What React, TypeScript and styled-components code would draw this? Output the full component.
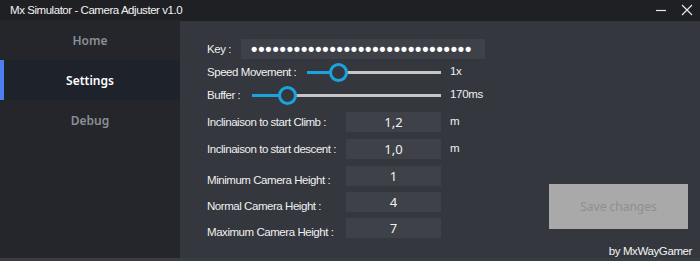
import React from "react";
import styled, { createGlobalStyle } from "styled-components";

const GlobalStyle = createGlobalStyle`
  html, body {
    margin: 0;
    padding: 0;
    background: #1f2024;
  }
  * {
    box-sizing: border-box;
  }
`;

const LABEL_FONT = `"Liberation Sans", Arial, sans-serif`;
const UI_FONT = `"Noto Sans", "Open Sans", sans-serif`;

type Slide = { label: string; left: number; width: number; pos: number; value: string; top: number };
type Field = { label: string; value: string; unit?: string; top: number; drop?: number };

const sliders: Slide[] = [
  { label: "Speed Movement :", left: 307, width: 134, pos: 32, value: "1x", top: 3 },
  { label: "Buffer :", left: 252, width: 189, pos: 36, value: "170ms", top: 3 },
];

const fields: Field[] = [
  { label: "Inclinaison to start Climb :", value: "1,2", unit: "m", top: 7 },
  { label: "Inclinaison to start descent :", value: "1,0", unit: "m", top: 7 },
  { label: "Minimum Camera Height :", value: "1", top: 7, drop: 4 },
  { label: "Normal Camera Height :", value: "4", top: 6, drop: 4 },
  { label: "Maximum Camera Height :", value: "7", top: 6, drop: 4 },
];

const App = () => {
  return (
    <>
      <GlobalStyle />
      <Window>
        <TitleBar>
          <Title>Mx Simulator - Camera Adjuster v1.0</Title>
          <WinButtons>
            <svg width="12" height="12" viewBox="0 0 12 12">
              <line x1="1" y1="6.5" x2="11" y2="6.5" stroke="#e6e6e6" strokeWidth="1.2" />
            </svg>
            <svg width="12" height="12" viewBox="0 0 12 12">
              <path d="M1 1 L11 11 M11 1 L1 11" stroke="#e6e6e6" strokeWidth="1.2" />
            </svg>
          </WinButtons>
        </TitleBar>
        <Body>
          <Sidebar>
            <NavItem>Home</NavItem>
            <NavItem active>Settings</NavItem>
            <NavItem>Debug</NavItem>
          </Sidebar>
          <Content>
            <Form>
              <KeyRow>
                <Label>Key :</Label>
                <KeyBox>{"•".repeat(31)}</KeyBox>
              </KeyRow>
              {sliders.map((s) => (
                <Row key={s.label} top={s.top}>
                  <Label>{s.label}</Label>
                  <Track left={s.left} width={s.width}>
                    <Fill style={{ width: s.pos }} />
                    <Thumb style={{ left: s.pos - 10 }} />
                  </Track>
                  <Unit>{s.value}</Unit>
                </Row>
              ))}
              {fields.map((f) => (
                <FieldRow key={f.label} top={f.top}>
                  <Label drop={f.drop}>{f.label}</Label>
                  <ValueBox>{f.value}</ValueBox>
                  {f.unit && <Unit>{f.unit}</Unit>}
                </FieldRow>
              ))}
            </Form>
            <Aside>
              <SaveButton disabled>Save changes</SaveButton>
              <Credit>by MxWayGamer</Credit>
            </Aside>
          </Content>
        </Body>
        <BottomStrip />
      </Window>
    </>
  );
};

const Window = styled.div`
  width: 700px;
  height: 261px;
  display: flex;
  flex-direction: column;
  background: #1f2024;
  overflow: hidden;
`;

const TitleBar = styled.div`
  height: 20px;
  display: flex;
  align-items: center;
  justify-content: space-between;
  padding: 0 7px 0 10px;
  background: #1f2024;
`;

const Title = styled.span`
  font-family: ${LABEL_FONT};
  font-size: 11.5px;
  color: #f2f2f2;
  letter-spacing: -0.45px;
`;

const WinButtons = styled.div`
  display: flex;
  gap: 14px;
  align-items: center;
`;

const Body = styled.div`
  flex: 1;
  display: flex;
`;

const Sidebar = styled.nav`
  width: 180px;
  display: flex;
  flex-direction: column;
  background: #24262b;
`;

const NavItem = styled.div<{ active?: boolean }>`
  height: 40px;
  display: flex;
  align-items: center;
  justify-content: center;
  font-family: ${UI_FONT};
  font-size: 12px;
  font-weight: 600;
  color: ${(p) => (p.active ? "#ffffff" : "#8b8e95")};
  background: ${(p) => (p.active ? "#1e222a" : "transparent")};
  border-left: 4px solid ${(p) => (p.active ? "#4d7ff0" : "transparent")};
  padding-right: 4px;
`;

const Content = styled.main`
  flex: 1;
  display: flex;
  background: #34373e;
  margin-top: 1px;
`;

const Form = styled.div`
  width: 290px;
  padding: 18px 0 0 27px;
  display: flex;
  flex-direction: column;
`;

const Row = styled.div<{ top?: number }>`
  position: relative;
  height: 20px;
  display: flex;
  align-items: center;
  margin-top: ${(p) => p.top ?? 0}px;
`;

const KeyRow = styled(Row)`
  display: grid;
  grid-template-columns: 34px 244px;
`;

const FieldRow = styled(Row)`
  display: grid;
  grid-template-columns: 139px 95px auto;
`;

const Label = styled.span<{ drop?: number }>`
  font-family: ${LABEL_FONT};
  font-size: 11.5px;
  letter-spacing: -0.45px;
  color: #f0f0f0;
  white-space: nowrap;
  position: relative;
  top: ${(p) => p.drop ?? 0}px;
`;

const KeyBox = styled.div`
  height: 20px;
  background: #3e4148;
  color: #ffffff;
  font-family: "Liberation Sans", sans-serif;
  font-size: 18px;
  font-weight: bold;
  letter-spacing: 0.83px;
  line-height: 20px;
  padding-left: 10px;
  overflow: hidden;
  white-space: nowrap;
`;

const Track = styled.div<{ left: number; width: number }>`
  position: absolute;
  left: ${(p) => p.left - 207}px;
  width: ${(p) => p.width}px;
  top: 9px;
  height: 3px;
  background: #c5c5c7;
`;

const Fill = styled.div`
  height: 3px;
  background: #1ba3de;
`;

const Thumb = styled.div`
  position: absolute;
  top: -8px;
  width: 19px;
  height: 19px;
  border-radius: 50%;
  border: 3px solid #1ba3de;
  background: #34373e;
`;

const Unit = styled.span`
  font-family: ${LABEL_FONT};
  font-size: 11.5px;
  letter-spacing: -0.3px;
  color: #f0f0f0;
  position: absolute;
  left: 243px;
  top: 3px;
`;

const ValueBox = styled.div`
  height: 20px;
  background: #3e4148;
  color: #f2f2f2;
  font-family: ${UI_FONT};
  font-size: 13px;
  display: flex;
  align-items: center;
  justify-content: center;
`;

const Aside = styled.div`
  flex: 1;
  display: flex;
  flex-direction: column;
  align-items: flex-end;
  justify-content: flex-end;
  padding: 0 8px 0 0;
`;

const SaveButton = styled.button`
  width: 139px;
  height: 45px;
  margin-right: 4px;
  border: none;
  background: #a9a9a9;
  color: #8f8f8f;
  font-family: ${UI_FONT};
  font-size: 12px;
`;

const Credit = styled.span`
  margin-top: 16px;
  margin-bottom: 1px;
  font-family: ${LABEL_FONT};
  font-size: 11.5px;
  letter-spacing: -0.4px;
  color: #f5f5f5;
`;

const BottomStrip = styled.div`
  height: 3px;
  background: #393c43;
`;

export default App;
